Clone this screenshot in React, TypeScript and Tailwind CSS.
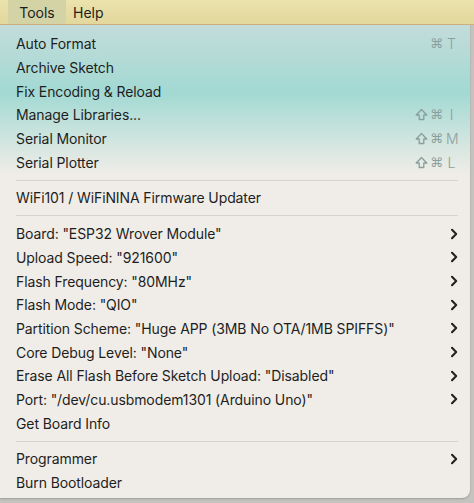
import { FC } from "react";

type Row =
  | { kind: "item"; label: string; shortcut?: { shift?: boolean; key: string }; sub?: boolean }
  | { kind: "sep" };

const rows: Row[] = [
  { kind: "item", label: "Auto Format", shortcut: { key: "T" } },
  { kind: "item", label: "Archive Sketch" },
  { kind: "item", label: "Fix Encoding & Reload" },
  { kind: "item", label: "Manage Libraries...", shortcut: { shift: true, key: "I" } },
  { kind: "item", label: "Serial Monitor", shortcut: { shift: true, key: "M" } },
  { kind: "item", label: "Serial Plotter", shortcut: { shift: true, key: "L" } },
  { kind: "sep" },
  { kind: "item", label: "WiFi101 / WiFiNINA Firmware Updater" },
  { kind: "sep" },
  { kind: "item", label: 'Board: "ESP32 Wrover Module"', sub: true },
  { kind: "item", label: 'Upload Speed: "921600"', sub: true },
  { kind: "item", label: 'Flash Frequency: "80MHz"', sub: true },
  { kind: "item", label: 'Flash Mode: "QIO"', sub: true },
  { kind: "item", label: 'Partition Scheme: "Huge APP (3MB No OTA/1MB SPIFFS)"', sub: true },
  { kind: "item", label: 'Core Debug Level: "None"', sub: true },
  { kind: "item", label: 'Erase All Flash Before Sketch Upload: "Disabled"', sub: true },
  { kind: "item", label: 'Port: "/dev/cu.usbmodem1301 (Arduino Uno)"', sub: true },
  { kind: "item", label: "Get Board Info" },
  { kind: "sep" },
  { kind: "item", label: "Programmer", sub: true },
  { kind: "item", label: "Burn Bootloader" },
];

const Chevron: FC = () => (
  <svg width="8" height="12" viewBox="0 0 8 12" className="text-[#222]">
    <path d="M2 1.8 L6.2 6 L2 10.2" fill="none" stroke="currentColor" strokeWidth="2.1" strokeLinecap="round" strokeLinejoin="round" />
  </svg>
);

const Shift: FC = () => (
  <svg width="13" height="13" viewBox="0 0 13 13" className="mr-[2px]">
    <path d="M6.5 1.5 L11.8 7 H8.8 V11.5 H4.2 V7 H1.2 Z" fill="none" stroke="currentColor" strokeWidth="1.3" strokeLinejoin="round" />
  </svg>
);

const App: FC = () => {
  return (
    <div className="w-[474px] h-[503px] overflow-hidden bg-[#c4c3bf] font-['Inter','Noto_Sans',sans-serif] text-[14px] text-[#1e1e1e]">
      <div className="h-[25px] flex items-stretch bg-gradient-to-b from-[#ebe3ad] to-[#e2d79c] border-b border-[#cdb27c]">
        <div className="ml-[8px] w-[58px] flex items-center justify-center bg-[#d3d3a6] rounded-b-[3px]">Tools</div>
        <div className="ml-[7px] flex items-center">Help</div>
      </div>
      <div className="relative w-[470px] h-[473px] rounded-br-[8px] bg-[#f0ede8] shadow-[0_1px_2px_rgba(0,0,0,0.2)] overflow-hidden">
        <div className="absolute inset-x-0 top-0 h-[150px] bg-gradient-to-b from-[#c3dcda] via-[#a2d9d3] via-45% to-[#f0ede8]" />
        <div className="relative pt-[7px] flex flex-col">
          {rows.map((r, i) =>
            r.kind === "sep" ? (
              <div key={i} className="h-[12px] flex items-center pl-[16px] pr-[12px]">
                <div className="h-px w-full bg-[#d6d3ce]" />
              </div>
            ) : (
              <div key={i} className="h-[23.7px] flex items-center justify-between pl-[16px] pr-[12px]">
                <span className="tracking-[-0.1px]">{r.label}</span>
                {r.shortcut && (
                  <span className="flex items-center text-[#8a9e9d] text-[14px] mr-[1px]">
                    {r.shortcut.shift && <Shift />}
                    <span className="font-['DejaVu_Sans',sans-serif] text-[13px]">⌘</span>
                    <span className="ml-[3px] w-[11px] text-center font-['Inter',sans-serif] font-light">{r.shortcut.key}</span>
                  </span>
                )}
                {r.sub && <Chevron />}
              </div>
            )
          )}
        </div>
      </div>
    </div>
  );
};

export default App;
